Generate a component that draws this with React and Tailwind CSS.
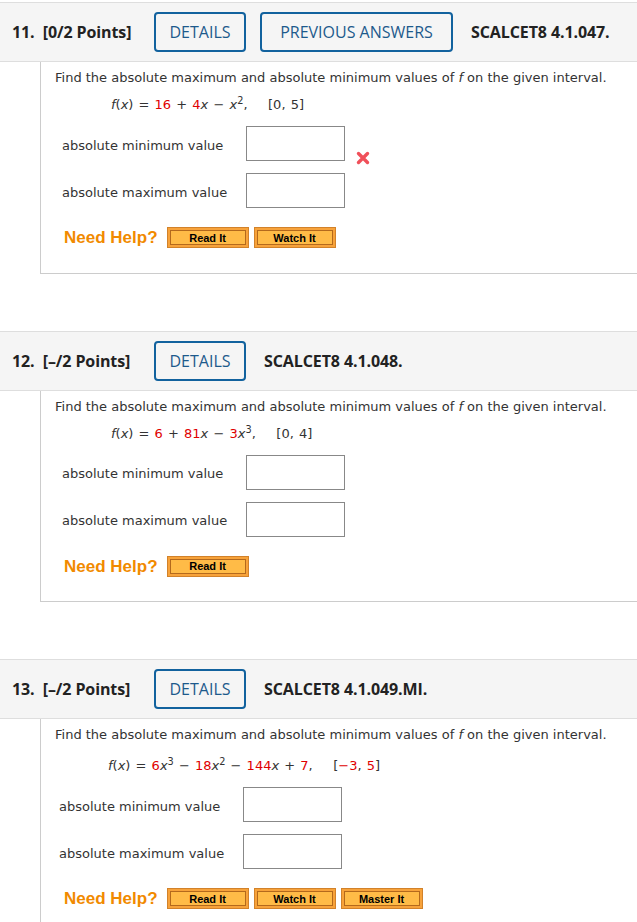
import React from "react";

const headFont = { fontFamily: '"Open Sans", "Noto Sans", sans-serif' };
const bodyFont = { fontFamily: '"DejaVu Sans", Verdana, sans-serif' };

function R({ children }) {
  return <span className="text-[#e00000]">{children}</span>;
}

function HelpButton({ label }) {
  return (
    <span className="inline-flex h-[21px] w-[82px] items-center justify-center border border-[#d2822a] bg-[#f7a23a] p-[2px]">
      <span
        className="flex h-full w-full items-center justify-center border border-[#b4691c] bg-[#ffbb47] text-[11px] font-bold text-black"
        style={{ fontFamily: '"Liberation Sans", Arial, sans-serif' }}
      >
        {label}
      </span>
    </span>
  );
}

function OutlineButton({ children, w }) {
  return (
    <span
      className={`flex h-[40px] items-center justify-center rounded-[4px] border-2 border-[#12629e] text-[16px] text-[#1d5a8c] ${w}`}
    >
      {children}
    </span>
  );
}

function Question({ num, points, code, buttons, formula, formulaPad, formulaTop, labelPad, help, wrong, extraTop }) {
  return (
    <section className={extraTop}>
      <div
        className="flex h-[60px] items-center border-y border-[#dedede] bg-[#f5f5f5] pl-[12px]"
        style={headFont}
      >
        <span className="w-[142px] text-[16px] font-bold tracking-[-0.1px] text-[#222]">
          {num}. &nbsp;[{points} Points]
        </span>
        <div className="flex gap-[14px]">
          {buttons.map((b) => (
            <OutlineButton key={b} w={b === "DETAILS" ? "w-[92px]" : "w-[193px]"}>
              {b}
            </OutlineButton>
          ))}
        </div>
        <span className="ml-[18px] text-[16px] font-bold tracking-[-0.1px] text-[#222]">{code}</span>
      </div>

      <div className="ml-[40px] border-b border-l border-[#cccccc] pb-[22px] pt-[8px] text-[#333]" style={bodyFont}>
        <p className="pl-[14px] text-[13px] leading-[16px]">
          Find the absolute maximum and absolute minimum values of <i>f</i> on the given interval.
        </p>
        <p className={`text-[13px] leading-[18px] [word-spacing:1px] ${formulaTop} ${formulaPad}`}>{formula}</p>

        <div className={`mt-[12px] flex flex-col gap-[12px] ${labelPad}`}>
          {["absolute minimum value", "absolute maximum value"].map((l, i) => (
            <div key={l} className="flex items-center">
              <span className="w-[184px] pt-[4px] text-[13px] text-[#333]">{l}</span>
              <span className="relative h-[35px] w-[99px] border border-[#888] bg-white">
                {wrong && i === 0 && (
                  <svg width="14" height="14" viewBox="0 0 14 14" className="absolute left-[109px] top-[24px]">
                    <path d="M2.5 2.5 L11.5 11.5 M11.5 2.5 L2.5 11.5" stroke="#f0505a" strokeWidth="3.4" strokeLinecap="round" />
                  </svg>
                )}
              </span>
            </div>
          ))}
        </div>

        <div className="mt-[17px] flex items-center pl-[23px]">
          <span
            className="mr-[9px] text-[17px] font-bold text-[#f18a00]"
            style={{ fontFamily: '"Liberation Sans", Arial, sans-serif' }}
          >
            Need Help?
          </span>
          <div className="flex gap-[5px]">
            {help.map((h) => (
              <HelpButton key={h} label={h} />
            ))}
          </div>
        </div>
      </div>
    </section>
  );
}

export default function App() {
  return (
    <div className="min-h-[922px] w-[637px] overflow-hidden bg-white pt-[2px]">
      <Question
        num="11"
        points="0/2"
        code="SCALCET8 4.1.047."
        buttons={["DETAILS", "PREVIOUS ANSWERS"]}
        formulaPad="pl-[70px]"
        formulaTop="mt-[10px]"
        labelPad="pl-[21px]"
        wrong
        help={["Read It", "Watch It"]}
        formula={
          <>
            <i>f</i>(<i>x</i>) = <R>16</R> + <R>4</R><i>x</i> − <i>x</i>
            <sup>2</sup>,&nbsp;&nbsp;&nbsp; [0, 5]
          </>
        }
      />
      <Question
        num="12"
        points="–/2"
        code="SCALCET8 4.1.048."
        buttons={["DETAILS"]}
        formulaPad="pl-[70px]"
        formulaTop="mt-[10px]"
        labelPad="pl-[21px]"
        extraTop="mt-[57px]"
        help={["Read It"]}
        formula={
          <>
            <i>f</i>(<i>x</i>) = <R>6</R> + <R>81</R><i>x</i> − <R>3</R><i>x</i>
            <sup>3</sup>,&nbsp;&nbsp;&nbsp; [0, 4]
          </>
        }
      />
      <Question
        num="13"
        points="–/2"
        code="SCALCET8 4.1.049.MI."
        buttons={["DETAILS"]}
        formulaPad="pl-[67px]"
        formulaTop="mt-[14px]"
        labelPad="pl-[18px]"
        extraTop="mt-[57px]"
        help={["Read It", "Watch It", "Master It"]}
        formula={
          <>
            <i>f</i>(<i>x</i>) = <R>6</R>
            <i>x</i>
            <sup>3</sup> − <R>18</R>
            <i>x</i>
            <sup>2</sup> − <R>144</R>
            <i>x</i> + <R>7</R>,&nbsp;&nbsp;&nbsp; [<R>−3</R>, <R>5</R>]
          </>
        }
      />
    </div>
  );
}
